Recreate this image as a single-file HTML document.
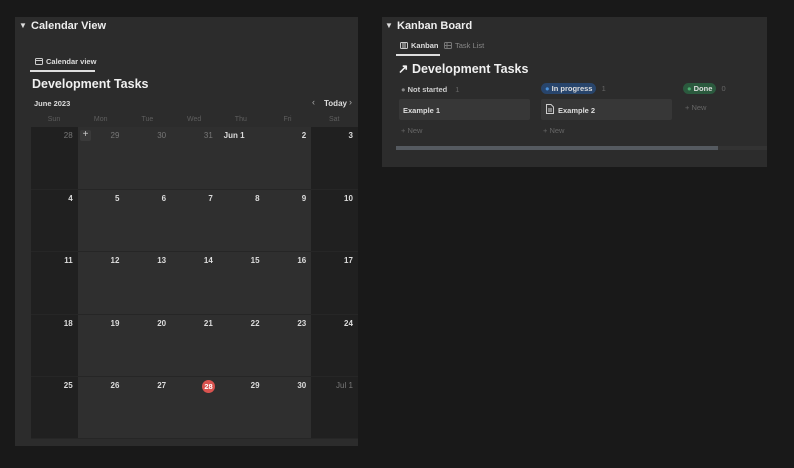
<!DOCTYPE html>
<html><head><meta charset="utf-8"><style>
*{margin:0;padding:0;box-sizing:border-box}
body{width:794px;height:468px;background:#191919;font-family:"Liberation Sans",sans-serif;color:#e6e6e6;position:relative;overflow:hidden}
.a{position:absolute;white-space:nowrap}
.panel{position:absolute;background:#2c2c2c}
.cell{position:absolute;background:#2f2f2f;border-bottom:1px solid #262626}
.we{background:#202020}
.num{position:absolute;font-size:8px;font-weight:bold;color:#ddd;text-align:right}
.dim{color:#777;font-weight:normal}
.dow{position:absolute;font-size:7px;color:#5e5e5e;text-align:center;width:46px}
</style></head><body>
<div class="panel" style="left:15px;top:17px;width:343px;height:429px"></div>
<div class="a" style="left:19px;top:21px;font-size:8px;color:#ddd">▼</div>
<div class="a" style="left:31px;top:20px;font-size:11px;font-weight:bold;color:#eee">Calendar View</div>
<svg class="a" style="left:35px;top:58px" width="8" height="7"><rect x="0.5" y="0.5" width="7" height="6" rx="1" fill="none" stroke="#ccc"/><line x1="0.5" y1="2.5" x2="7.5" y2="2.5" stroke="#ccc"/></svg>
<div class="a" style="left:46px;top:57px;font-size:7.5px;font-weight:bold;color:#ddd">Calendar view</div>
<div class="a" style="left:30px;top:70px;width:65px;height:2px;background:#ddd"></div>
<div class="a" style="left:32px;top:77px;font-size:12.5px;font-weight:bold;color:#f0f0f0">Development Tasks</div>
<div class="a" style="left:34px;top:99px;font-size:7.5px;font-weight:bold;color:#ddd">June 2023</div>
<div class="a" style="left:312px;top:97px;font-size:9px;color:#aaa">‹</div>
<div class="a" style="left:324px;top:99px;font-size:8px;font-weight:bold;color:#ddd">Today</div>
<div class="a" style="left:349px;top:97px;font-size:9px;color:#aaa">›</div>
<div id="cal"></div>
<div class="a" style="left:80px;top:130px;width:11px;height:11px;background:#3a3a3a;border-radius:2px;color:#ccc;font-size:10px;line-height:10px;text-align:center">+</div>
<div class="a" style="left:202px;top:380px;width:13px;height:13px;border-radius:50%;background:#d9534f;color:#fff;font-size:7.5px;font-weight:bold;line-height:13px;text-align:center">28</div>

<div class="panel" style="left:382px;top:17px;width:385px;height:150px"></div>
<div class="a" style="left:385px;top:21px;font-size:8px;color:#ddd">▼</div>
<div class="a" style="left:397px;top:20px;font-size:11px;font-weight:bold;color:#eee">Kanban Board</div>
<svg class="a" style="left:400px;top:42px" width="8" height="7"><rect x="0.5" y="0.5" width="7" height="6" rx="1" fill="none" stroke="#ccc"/><line x1="3" y1="1" x2="3" y2="6" stroke="#ccc"/><line x1="5" y1="1" x2="5" y2="6" stroke="#ccc"/></svg>
<div class="a" style="left:411px;top:41px;font-size:7.5px;font-weight:bold;color:#ddd">Kanban</div>
<svg class="a" style="left:444px;top:42px" width="8" height="7"><rect x="0.5" y="0.5" width="7" height="6" rx="1" fill="none" stroke="#777"/><line x1="0.5" y1="3.5" x2="7.5" y2="3.5" stroke="#777"/><line x1="3" y1="1" x2="3" y2="6" stroke="#777"/></svg>
<div class="a" style="left:455px;top:41px;font-size:7.5px;color:#888">Task List</div>
<div class="a" style="left:396px;top:54px;width:44px;height:2px;background:#ddd"></div>
<div class="a" style="left:398px;top:61px;font-size:12.5px;font-weight:bold;color:#f0f0f0">↗ Development Tasks</div>
<div class="a" style="left:401px;top:85px;font-size:7.5px;font-weight:bold;color:#ccc"><span style="color:#888">●</span> Not started <span style="color:#666;font-weight:normal;margin-left:6px">1</span></div>
<div class="a" style="left:541px;top:84px;font-size:7.5px;font-weight:bold;color:#ddd"><span style="background:#28456c;border-radius:6px;padding:1px 4px"><span style="color:#4a90d9">●</span> In progress</span> <span style="color:#666;font-weight:normal;margin-left:3px">1</span></div>
<div class="a" style="left:683px;top:84px;font-size:7.5px;font-weight:bold;color:#ddd"><span style="background:#2b5a3e;border-radius:6px;padding:1px 4px"><span style="color:#4cae6f">●</span> Done</span> <span style="color:#666;font-weight:normal;margin-left:3px">0</span></div>
<div class="a" style="left:399px;top:99px;width:131px;height:21px;background:#373737;border-radius:2px"></div>
<div class="a" style="left:403px;top:106px;font-size:7.5px;font-weight:bold;color:#ddd">Example 1</div>
<div class="a" style="left:541px;top:99px;width:131px;height:21px;background:#373737;border-radius:2px"></div>
<svg class="a" style="left:546px;top:104px" width="8" height="10"><path d="M0.5 0.5H5L7.5 3V9.5H0.5Z" fill="none" stroke="#ccc"/><line x1="2" y1="5" x2="6" y2="5" stroke="#ccc"/><line x1="2" y1="7" x2="6" y2="7" stroke="#ccc"/></svg>
<div class="a" style="left:558px;top:106px;font-size:7.5px;font-weight:bold;color:#ddd">Example 2</div>
<div class="a" style="left:401px;top:126px;font-size:7.5px;color:#666">+ New</div>
<div class="a" style="left:543px;top:126px;font-size:7.5px;color:#666">+ New</div>
<div class="a" style="left:685px;top:103px;font-size:7.5px;color:#666">+ New</div>
<div class="a" style="left:396px;top:146px;width:371px;height:4px;background:#333"></div>
<div class="a" style="left:396px;top:146px;width:322px;height:4px;background:#555a60"></div>
<script>
var c=document.getElementById('cal'),h='';
var dn=['Sun','Mon','Tue','Wed','Thu','Fri','Sat'];
var x0=31,w=46.71,y0=127,rh=62.6;
for(var i=0;i<7;i++)h+='<div class="dow" style="left:'+(x0+i*w)+'px;top:116px">'+dn[i]+'</div>';
var d=[28,29,30,31,'Jun 1',2,3];
for(var r=0;r<5;r++)for(var i=0;i<7;i++){
var n=r==0?d[i]:(r*7+i-3);var dim=false;
if(r==0&&i<4)dim=true;if(r==4&&n>30){n='Jul 1';dim=true}
var L=x0+i*w,T=y0+r*rh;
h+='<div class="cell'+((i==0||i==6)?' we':'')+'" style="left:'+L+'px;top:'+T+'px;width:'+(w+0.5)+'px;height:'+(r==4?62:rh)+'px"></div>';
if(!(r==4&&i==3))h+='<div class="num'+(dim?' dim':'')+'" style="left:'+L+'px;top:'+(T+4)+'px;width:'+(i==4&&r==0?w-20:w-5)+'px">'+n+'</div>';
}
c.innerHTML=h;
</script>
</body></html>
